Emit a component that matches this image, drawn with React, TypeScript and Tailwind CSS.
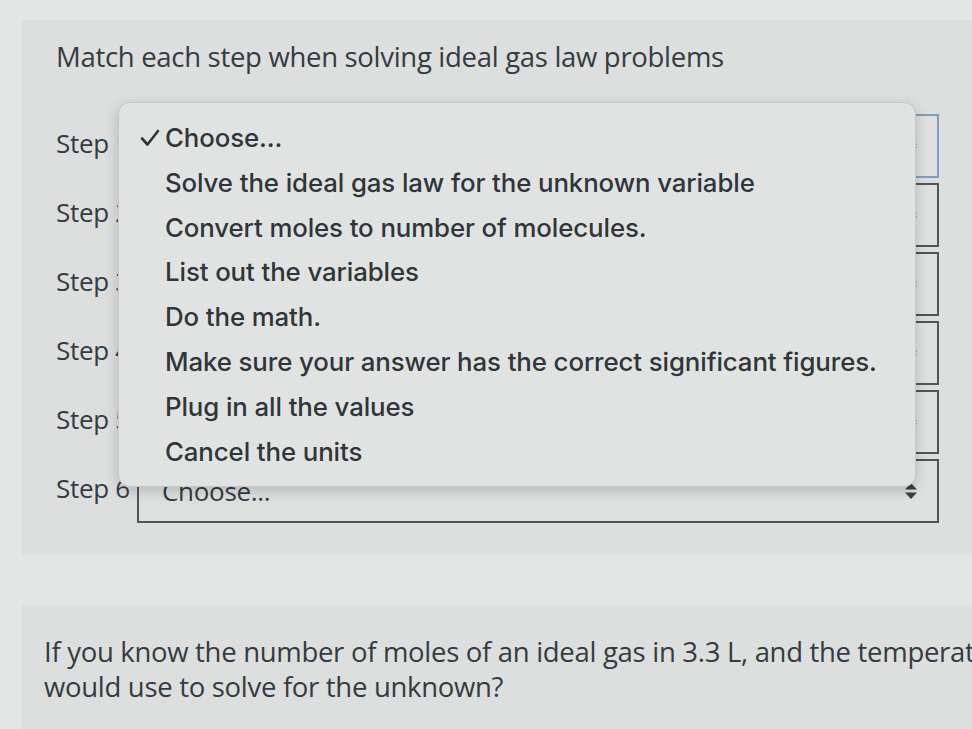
import React from "react";

const options = [
  "Choose...",
  "Solve the ideal gas law for the unknown variable",
  "Convert moles to number of molecules.",
  "List out the variables",
  "Do the math.",
  "Make sure your answer has the correct significant figures.",
  "Plug in all the values",
  "Cancel the units",
];

function Arrows() {
  return (
    <svg width="14" height="20" viewBox="0 0 14 20" className="shrink-0">
      <path d="M7 2 L13 8.5 H1 Z" fill="#3a3f43" />
      <path d="M7 18 L13 11.5 H1 Z" fill="#3a3f43" />
    </svg>
  );
}

export default function App() {
  const steps = [1, 2, 3, 4, 5, 6];
  return (
    <div className="relative w-[972px] h-[729px] overflow-hidden bg-[#e4e6e5] text-[#353b40] font-['Open_Sans',sans-serif]">
      <div className="pt-[20px] pl-[22px]">
        <div className="h-[535px] bg-[#dcdfde] pl-[34px] pt-[21px]">
          <h1 className="text-[27.5px] leading-[32px] font-normal tracking-[-0.3px]">
            Match each step when solving ideal gas law problems
          </h1>
          <div className="mt-[41px] flex flex-col gap-[5px]">
            {steps.map((n) => (
              <div key={n} className="flex items-center h-[64px]">
                <div className="w-[81px] text-[26px] leading-[32px] whitespace-nowrap -mt-[6px] tracking-[-0.3px]">
                  Step {n}
                </div>
                <div
                  className={
                    "w-[802px] h-[64px] border-2 flex items-center justify-between pl-[23px] pr-[19px] bg-[#dee1e0] " +
                    (n === 1 ? "border-[#7f9dbf]" : "border-[#50555a]")
                  }
                >
                  <span className="text-[26px] leading-[32px] tracking-[-0.3px]">Choose...</span>
                  <Arrows />
                </div>
              </div>
            ))}
          </div>
        </div>
        <div className="mt-[50px] h-[200px] bg-[#dcdfde] pl-[22px] pt-[29px]">
          <p className="text-[27.5px] leading-[35px] whitespace-nowrap tracking-[-0.3px]">
            If you know the number of moles of an ideal gas in 3.3 L, and the temperature is known, what equation
          </p>
          <p className="text-[27.5px] leading-[35px] whitespace-nowrap tracking-[-0.3px]">
            would use to solve for the unknown?
          </p>
        </div>
      </div>

      <div className="absolute left-[118px] top-[102px] w-[798px] h-[385px] rounded-[12px] bg-[#e0e3e2] border border-[#c5c8c7] shadow-[0_4px_14px_rgba(0,0,0,0.18)] py-[13px] font-['Inter',sans-serif] text-[#30353a]">
        {options.map((o, i) => (
          <div key={o} className="relative h-[44.8px] flex items-center pl-[46px] text-[25.8px] font-medium whitespace-nowrap tracking-[-0.1px]">
            {i === 0 && (
              <svg width="20" height="18" viewBox="0 0 20 18" className="absolute left-[21px] top-[13px]">
                <path d="M2 9.5 L7.5 15.5 L18 2" fill="none" stroke="#30353a" strokeWidth="2.6" strokeLinecap="round" strokeLinejoin="round" />
              </svg>
            )}
            {o}
          </div>
        ))}
      </div>
    </div>
  );
}
